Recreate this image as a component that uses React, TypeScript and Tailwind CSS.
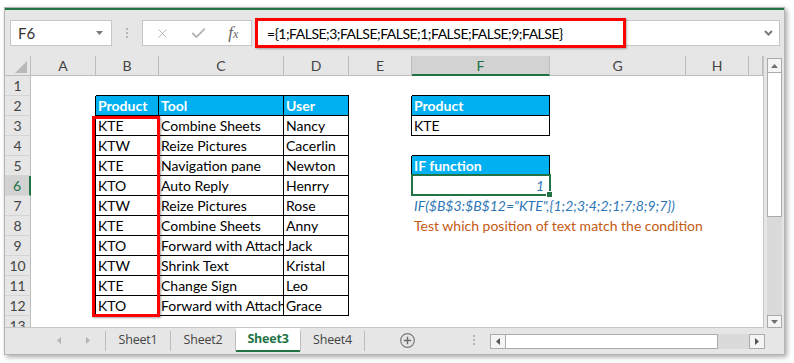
import React from 'react';
import { X, Check } from 'lucide-react';

const COLS = ['A', 'B', 'C', 'D', 'E', 'F', 'G', 'H', ''];
const ROWS = [1, 2, 3, 4, 5, 6, 7, 8, 9, 10, 11, 12, 13];

const CELLS: Record<string, string> = {
  B2: 'Product', C2: 'Tool', D2: 'User',
  B3: 'KTE', C3: 'Combine Sheets', D3: 'Nancy',
  B4: 'KTW', C4: 'Reize Pictures', D4: 'Cacerlin',
  B5: 'KTE', C5: 'Navigation pane', D5: 'Newton',
  B6: 'KTO', C6: 'Auto Reply', D6: 'Henrry',
  B7: 'KTW', C7: 'Reize Pictures', D7: 'Rose',
  B8: 'KTE', C8: 'Combine Sheets', D8: 'Anny',
  B9: 'KTO', C9: 'Forward with Attachment', D9: 'Jack',
  B10: 'KTW', C10: 'Shrink Text', D10: 'Kristal',
  B11: 'KTE', C11: 'Change Sign', D11: 'Leo',
  B12: 'KTO', C12: 'Forward with Attachment', D12: 'Grace',
  F2: 'Product', F3: 'KTE',
  F5: 'IF function', F6: '1',
  F7: 'IF($B$3:$B$12="KTE",{1;2;3;4;2;1;7;8;9;7})',
  F8: 'Test which position of text match the condition',
};

const HEADERS = ['B2', 'C2', 'D2', 'F2', 'F5'];

// cells that belong to one of the bordered tables
const boxed = (col: string, row: number) =>
  (['B', 'C', 'D'].includes(col) && row >= 2 && row <= 12) ||
  (col === 'F' && [2, 3, 5, 6].includes(row));

const nextCol = (col: string) => COLS[COLS.indexOf(col) + 1] ?? '';

function Tri({ dir, color }: { dir: 'up' | 'down' | 'left' | 'right'; color: string }) {
  const pts = {
    up: '0,4 7,4 3.5,0',
    down: '0,0 7,0 3.5,4',
    left: '4,0 4,7 0,3.5',
    right: '0,0 0,7 4,3.5',
  }[dir];
  const vert = dir === 'up' || dir === 'down';
  return (
    <svg width={vert ? 7 : 4} height={vert ? 4 : 7} viewBox={vert ? '0 0 7 4' : '0 0 4 7'}>
      <polygon points={pts} fill={color} />
    </svg>
  );
}

function Dots() {
  return (
    <div className="flex flex-col gap-[2px]">
      <span className="w-[2px] h-[2px] bg-[#b4b4b4]" />
      <span className="w-[2px] h-[2px] bg-[#b4b4b4]" />
      <span className="w-[2px] h-[2px] bg-[#b4b4b4]" />
    </div>
  );
}

function Cell({ col, row }: { col: string; row: number }) {
  const key = `${col}${row}`;
  const text = CELLS[key];
  const inBox = boxed(col, row);
  const topEdge = !inBox && boxed(col, row + 1);
  const leftEdge = !inBox && col !== '' && boxed(nextCol(col), row);
  const isHead = HEADERS.includes(key);
  const spill = key === 'F7' || key === 'F8';

  let tone = 'text-black';
  if (isHead) tone = 'bg-[#00b0f0] text-white font-bold';
  if (key === 'F6') tone = 'text-right italic text-[#2e75b6] pr-[5px]';
  if (key === 'F7') tone = 'italic text-[#2e75b6]';
  if (key === 'F8') tone = 'text-[#c55a11]';

  return (
    <div
      className={`relative border-black pl-[2px] leading-[20px] ${inBox ? 'border-r border-b' : ''} ${
        topEdge ? 'border-b' : ''
      } ${leftEdge ? 'border-r' : ''} ${tone}`}
    >
      <div className={`whitespace-nowrap ${spill ? 'overflow-visible' : 'overflow-hidden'}`}>{text}</div>
      {key === 'B3' && (
        <div className="absolute z-10 left-[-4px] top-0 w-[68px] h-[201px] border-[3px] border-[#ff0000] shadow-[1px_1px_2px_rgba(0,0,0,0.35)]" />
      )}
      {key === 'F6' && (
        <div className="absolute z-10 left-[-1px] top-[-2px] w-[140px] h-[22px] border-2 border-[#217346]">
          <div className="absolute right-[-4px] bottom-[-4px] w-[7px] h-[7px] bg-[#217346] border border-white" />
        </div>
      )}
    </div>
  );
}

export default function App() {
  return (
    <div className="w-[794px] h-[363px] bg-white pt-[7px] pl-[4px] font-['Lato','Liberation_Sans',sans-serif]">
      <div className="w-[781px] h-[348px] border border-[#b4b4b4] bg-[#e6e6e6] shadow-[2px_2px_5px_rgba(0,0,0,0.35)] flex flex-col">
        <div className="h-[2px] bg-[#217346]" />

        {/* formula bar */}
        <div className="h-[46px] flex items-start pt-[10px] pl-[5px] pr-[4px]">
          <div className="w-[102px] h-[26px] bg-white border border-[#c6c6c6] flex items-center pl-[7px] pr-[8px] text-[15px] text-[#333]">
            <span className="flex-1">F6</span>
            <Tri dir="down" color="#7a7a7a" />
          </div>
          <div className="w-[30px] h-[26px] flex items-center justify-center">
            <Dots />
          </div>
          <div className="w-[110px] h-[26px] bg-white border border-[#c6c6c6] flex items-center">
            <div className="w-[40px] flex justify-center">
              <X size={15} strokeWidth={1.5} color="#b4b4b4" />
            </div>
            <div className="w-[34px] flex justify-center">
              <Check size={17} strokeWidth={2.5} color="#b4b4b4" />
            </div>
            <div className="w-[36px] flex justify-center items-baseline font-['Liberation_Serif',serif] italic text-[#666]">
              <span className="text-[17px]">f</span>
              <span className="text-[12px]">x</span>
            </div>
          </div>
          <div className="relative ml-[3px] flex-1 h-[26px] bg-white border border-[#c6c6c6] flex items-center pl-[11px] pr-[6px] text-[14px] tracking-[-0.5px] text-black">
            <span className="flex-1">={'{'}1;FALSE;3;FALSE;FALSE;1;FALSE;FALSE;9;FALSE{'}'}</span>
            <svg width="9" height="6" viewBox="0 0 9 6">
              <polyline points="1,1 4.5,4.5 8,1" fill="none" stroke="#7a7a7a" strokeWidth="2" />
            </svg>
            <div className="absolute left-[-1px] top-[-3px] w-[371px] h-[30px] border-[3px] border-[#ff0000] shadow-[1px_1px_2px_rgba(0,0,0,0.3)]" />
          </div>
        </div>

        {/* sheet + vertical scroll */}
        <div className="h-[272px] flex">
          <div className="w-[759px] h-[272px] bg-white border-r border-b border-[#c6c6c6] overflow-hidden">
            <div className="grid grid-cols-[26px_65px_63px_125px_65px_63px_138px_136px_63px_14px] auto-rows-[20px] text-[14px]">
              <div className="bg-[#e6e6e6] border-r border-b border-[#bdbdbd] flex items-end justify-end pr-[3px] pb-[2px]">
                <svg width="12" height="12" viewBox="0 0 12 12">
                  <polygon points="12,0 12,12 0,12" fill="#b9b9b9" />
                </svg>
              </div>
              {COLS.map((c) =>
                c === 'F' ? (
                  <div key={c} className="bg-[#d2d2d2] border-r border-[#bdbdbd] border-b-2 border-b-[#217346] text-center leading-[19px] text-[14px] text-[#217346]">
                    {c}
                  </div>
                ) : (
                  <div key={c} className="bg-[#e6e6e6] border-r border-b border-[#bdbdbd] text-center leading-[19px] text-[14px] text-[#444]">
                    {c}
                  </div>
                )
              )}
              {ROWS.map((r) => (
                <React.Fragment key={r}>
                  {r === 6 ? (
                    <div className="bg-[#d2d2d2] border-b border-[#dadada] border-r-2 border-r-[#217346] text-center leading-[20px] text-[14px] text-[#217346]">
                      {r}
                    </div>
                  ) : (
                    <div className="bg-[#e6e6e6] border-b border-[#d4d4d4] border-r border-r-[#bdbdbd] text-center leading-[20px] text-[14px] text-[#444]">
                      {r}
                    </div>
                  )}
                  {COLS.map((c) => (
                    <Cell key={c} col={c} row={r} />
                  ))}
                </React.Fragment>
              ))}
            </div>
          </div>
          <div className="flex-1 pl-[3px] pt-[2px]">
            <div className="w-[15px] h-[270px] flex flex-col">
              <div className="h-[15px] bg-[#f4f4f4] border border-[#ababab] flex items-center justify-center">
                <Tri dir="up" color="#6f6f6f" />
              </div>
              <div className="h-[144px] bg-white border-x border-b border-[#ababab]" />
              <div className="flex-1 bg-[#dadada]" />
              <div className="h-[13px] bg-[#f4f4f4] border border-[#ababab] flex items-center justify-center">
                <Tri dir="down" color="#6f6f6f" />
              </div>
            </div>
          </div>
        </div>

        {/* sheet tabs */}
        <div className="h-[26px] flex items-start font-['Open_Sans','Liberation_Sans',sans-serif] text-[12.5px] tracking-[-0.2px] text-[#444]">
          <div className="w-[100px] h-[24px] flex items-center">
            <div className="w-[56px] flex justify-end">
              <Tri dir="left" color="#b4b4b4" />
            </div>
            <div className="w-[29px] flex justify-end">
              <Tri dir="right" color="#b4b4b4" />
            </div>
          </div>
          <div className="w-px h-[20px] mt-[3px] bg-[#bdbdbd]" />
          <div className="w-[64px] h-[24px] flex items-center justify-center">Sheet1</div>
          <div className="w-px h-[20px] mt-[3px] bg-[#bdbdbd]" />
          <div className="w-[64px] h-[24px] flex items-center justify-center">Sheet2</div>
          <div className="w-px h-[20px] mt-[3px] bg-[#bdbdbd]" />
          <div className="w-[64px] h-[24px] bg-white border-b-2 border-[#217346] flex items-center justify-center font-bold text-[#217346]">
            Sheet3
          </div>
          <div className="w-px h-[20px] mt-[3px] bg-[#bdbdbd]" />
          <div className="w-[63px] h-[24px] flex items-center justify-center">Sheet4</div>
          <div className="w-px h-[20px] mt-[3px] bg-[#bdbdbd]" />
          <div className="w-[84px] h-[24px] flex items-center justify-center">
            <svg width="15" height="15" viewBox="0 0 15 15">
              <circle cx="7.5" cy="7.5" r="6.8" fill="none" stroke="#7a7a7a" strokeWidth="1.2" />
              <path d="M7.5 3.8v7.4M3.8 7.5h7.4" stroke="#6a6a6a" strokeWidth="1.4" />
            </svg>
          </div>
          <div className="w-[41px] h-[24px] flex items-center justify-center pl-[8px]">
            <Dots />
          </div>
          <div className="mt-[6px] w-[275px] h-[15px] flex">
            <div className="w-[16px] bg-[#f4f4f4] border border-[#ababab] flex items-center justify-center">
              <Tri dir="left" color="#555" />
            </div>
            <div className="w-[212px] bg-white border-y border-r border-[#ababab]" />
            <div className="flex-1 bg-[#dadada]" />
            <div className="w-[16px] bg-[#f4f4f4] border border-[#ababab] flex items-center justify-center">
              <Tri dir="right" color="#555" />
            </div>
          </div>
        </div>
      </div>
    </div>
  );
}
